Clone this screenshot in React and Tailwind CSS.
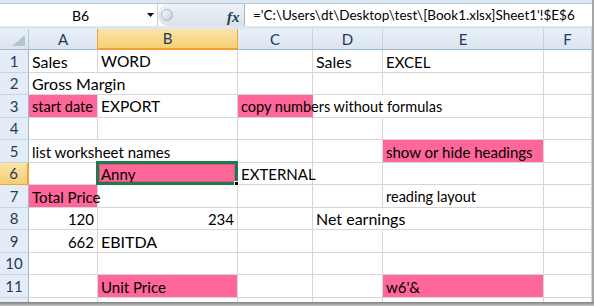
import React from "react";

const W = ["w-[69px]", "w-[140px]", "w-[75px]", "w-[70px]", "w-[161px]", "w-[48px]"];
const LETTERS = ["A", "B", "C", "D", "E", "F"];

// each row: array of 6 cells (null or {t, s, r, p, o})
const rows = [
  [{ t: "Sales", s: "text-[16px]" }, { t: "WORD", s: "text-[15.5px]" }, null, { t: "Sales", s: "text-[16px]" }, { t: "EXCEL", s: "text-[15px]" }, null],
  [{ t: "Gross Margin", s: "text-[16px]", o: true }, null, null, null, null, null],
  [{ t: "start date", s: "text-[14.5px]", p: true }, { t: "EXPORT", s: "text-[15.5px]" }, { t: "copy numbers without formulas", s: "text-[14.5px]", p: true, o: true }, { o: true }, null, null],
  [null, null, null, null, null, null],
  [{ t: "list worksheet names", s: "text-[15px]", o: true }, null, null, null, { t: "show or hide headings", s: "text-[15px]", p: true }, null],
  [null, { t: "Anny", s: "text-[15px]", p: true, sel: true }, { t: "EXTERNAL", s: "text-[15px]" }, null, null, null],
  [{ t: "Total Price", s: "text-[15px]", p: true }, null, null, null, { t: "reading layout", s: "text-[14.5px]" }, null],
  [{ t: "120", s: "text-[15px]", r: true }, { t: "234", s: "text-[15px]", r: true }, null, { t: "Net earnings", s: "text-[16px]", o: true }, null, null],
  [{ t: "662", s: "text-[15px]", r: true }, { t: "EBITDA", s: "text-[16px]" }, null, null, null, null],
  [null, null, null, null, null, null],
  [null, { t: "Unit Price", s: "text-[15px]", p: true }, null, null, { t: "w6'&", s: "text-[15px]", p: true }, null],
  [null, null, null, null, null, null],
];

function Cell({ c, i }) {
  const base = "relative h-full shrink-0 border-b border-[#d6d6d6] flex items-end pb-[2px] px-[3px] whitespace-nowrap leading-none text-black";
  const br = c && c.o ? "border-r border-r-transparent" : "border-r border-r-[#d6d6d6]";
  const bg = c && c.p ? "bg-[#ff6699]" : "";
  const just = c && c.r ? "justify-end" : "justify-start";
  return (
    <div className={`${W[i]} ${base} ${br} ${bg} ${just}`}>
      {c && c.t ? <span className={`${c.s} relative z-10`}>{c.t}</span> : null}
      {c && c.sel ? (
        <div className="absolute -left-[2px] -top-[2px] -right-[1px] -bottom-[1px] border-[3px] border-[#1f7a4c] shadow-[inset_0_0_0_1px_rgba(0,0,0,0.15)] z-20">
          <div className="absolute -right-[4px] -bottom-[4px] w-[5px] h-[5px] bg-black border border-white" />
        </div>
      ) : null}
    </div>
  );
}

export default function App() {
  return (
    <div className="w-[594px] h-[306px] overflow-hidden bg-white" style={{ fontFamily: "Lato, 'Noto Sans', sans-serif" }}>
      <div className="w-[594px] h-[302px] flex flex-col border-r-2 border-[#a6a6a6] overflow-hidden">
        {/* formula bar */}
        <div className="h-[29px] shrink-0 bg-[#dde7f2] pt-[3px] pb-[3px] flex flex-col">
          <div className="h-[23px] flex border-t border-[#b9c9da] bg-white">
            <div className="w-[158px] shrink-0 relative flex items-center justify-center border-r border-[#c5d3e2]">
              <span className="text-[14px] text-black pl-[4px]">B6</span>
              <svg className="absolute left-[147px] top-[9px]" width="8" height="5" viewBox="0 0 8 5">
                <path d="M0 0 H7 L3.5 4 Z" fill="#111" />
              </svg>
            </div>
            <div className="w-[87px] shrink-0 relative flex items-center bg-gradient-to-b from-[#eef2f7] to-[#d9e2ec] rounded-l-full border-r border-[#a9b8c9]">
              <div className="absolute left-[3px] top-[5px] w-[12px] h-[12px] rounded-full bg-gradient-to-br from-[#ffffff] to-[#bfcad7] border border-[#aab7c6]" />
              <span className="absolute left-[69px] top-[2px] text-[15px] font-bold italic text-[#233a5a]" style={{ fontFamily: "'Liberation Serif', serif" }}>
                fx
              </span>
            </div>
            <div className="flex-1 flex items-center pl-[8px] text-[13.5px] text-black whitespace-nowrap overflow-hidden">
              ='C:\Users\dt\Desktop\test\[Book1.xlsx]Sheet1'!$E$6
            </div>
          </div>
        </div>

        {/* column header */}
        <div className="h-[21px] shrink-0 flex border-b border-[#9eb6ce] bg-gradient-to-b from-[#e9eff7] to-[#dbe5f1]">
          <div className="w-[29px] shrink-0 relative border-r border-[#b8c8da]">
            <svg className="absolute right-[3px] bottom-[3px]" width="13" height="11" viewBox="0 0 13 11">
              <path d="M13 0 V11 H0 Z" fill="#b7c3d1" />
            </svg>
          </div>
          {LETTERS.map((l, i) => (
            <div
              key={l}
              className={`${W[i]} shrink-0 flex items-center justify-center text-[15px] text-[#23395b] ${
                i === 1
                  ? "bg-gradient-to-b from-[#fbe3a9] to-[#f7cf72] border-x border-[#f0a53c] border-b-2 border-b-[#f29d38] -mb-[1px] -ml-[1px] w-[141px]"
                  : "border-r border-[#c3d1e1]"
              }`}
            >
              {l}
            </div>
          ))}
        </div>

        {/* rows */}
        {rows.map((r, ri) => (
          <div key={ri} className="h-[22.5px] shrink-0 flex">
            <div
              className={`w-[29px] shrink-0 flex items-end justify-center pb-[3px] leading-none text-[15px] text-[#23395b] border-b ${
                ri === 5
                  ? "bg-gradient-to-b from-[#fbe3a9] to-[#f7cf72] border-b-[#f0a53c] border-r-2 border-r-[#f29d38]"
                  : "bg-[#e4ecf7] border-b-[#c5d3e3] border-r border-r-[#9eb6ce]"
              }`}
            >
              {ri + 1}
            </div>
            {r.map((c, ci) => (
              <Cell key={ci} c={c} i={ci} />
            ))}
          </div>
        ))}
      </div>
      <div className="h-[4px] bg-gradient-to-b from-[#7f7f7f] to-[#c8c8c8]" />
    </div>
  );
}
